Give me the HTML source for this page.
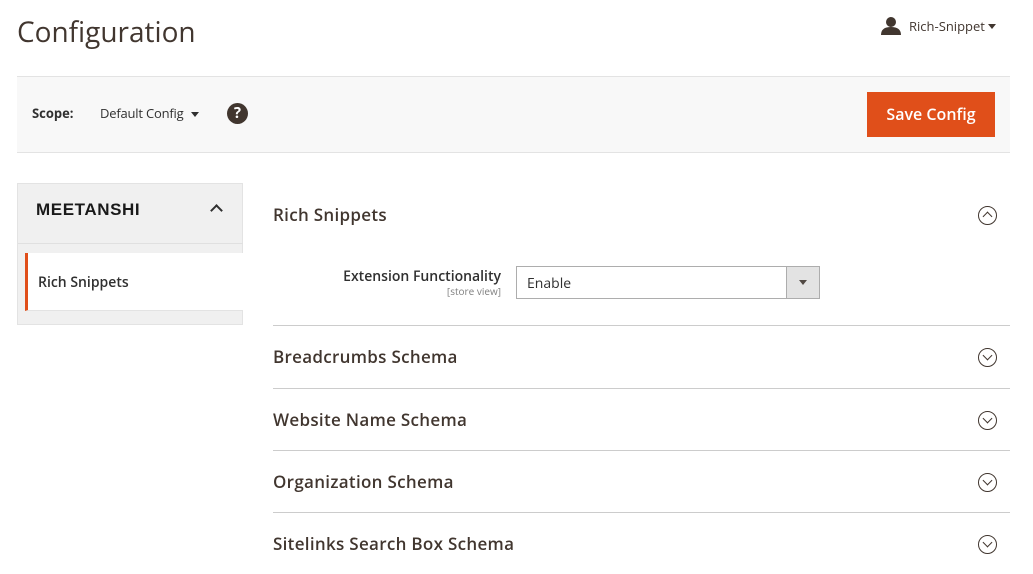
<!DOCTYPE html>
<html><head><style>
*{box-sizing:border-box;margin:0;padding:0}
body{width:1033px;height:574px;background:#fff;font-family:"Open Sans","Liberation Sans",sans-serif;color:#303030;position:relative;overflow:hidden}
.a{position:absolute}
.sec{position:absolute;left:273px;font-size:17px;font-weight:600;color:#41362f;letter-spacing:.3px}
.line{position:absolute;left:273px;width:737px;height:1px;background:#cccccc}
.circ{position:absolute;left:978px;width:19px;height:19px;border:1px solid #41362f;border-radius:50%}
</style></head><body>
<div class="a" style="left:17px;top:13px;font-size:28px;color:#41362f">Configuration</div>
<svg class="a" style="left:880px;top:16px" width="22" height="20" viewBox="0 0 22 20"><circle cx="11" cy="6" r="5" fill="#41362f"/><path d="M1 19 Q1 11 11 11 Q21 11 21 19Z" fill="#41362f"/></svg>
<div class="a" style="left:909px;top:17px;font-size:13px;color:#41362f">Rich-Snippet</div>
<div class="a" style="left:988px;top:24px;border:4px solid transparent;border-top:5px solid #41362f;border-bottom:0"></div>
<div class="a" style="left:17px;top:76px;width:993px;height:77px;background:#f8f8f8;border-top:1px solid #e3e3e3;border-bottom:1px solid #e3e3e3"></div>
<div class="a" style="left:32px;top:104px;font-size:13px;font-weight:bold;color:#303030">Scope:</div>
<div class="a" style="left:100px;top:104px;font-size:13px;color:#303030;letter-spacing:-.2px">Default Config</div>
<div class="a" style="left:191px;top:112px;border:4px solid transparent;border-top:5px solid #303030;border-bottom:0"></div>
<div class="a" style="left:227px;top:103px;width:21px;height:21px;border-radius:50%;background:#41362f;color:#fff;font-size:15px;font-weight:bold;text-align:center;line-height:21px">?</div>
<div class="a" style="left:867px;top:92px;width:128px;height:45px;background:#e04f1a;color:#fff;font-size:16px;font-weight:600;text-align:center;line-height:45px">Save Config</div>
<div class="a" style="left:17px;top:183px;width:226px;height:142px;background:#f0f0f0;border:1px solid #e3e3e3"></div>
<div class="a" style="left:18px;top:243px;width:225px;height:1px;background:#e0e0e0"></div>
<div class="a" style="left:36px;top:200px;font-size:17px;font-weight:900;color:#1a1a1a;letter-spacing:.6px;font-family:'Liberation Sans',sans-serif">MEETANSHI</div>
<div class="a" style="left:212px;top:206px;width:9px;height:9px;border-left:2px solid #303030;border-top:2px solid #303030;transform:rotate(45deg)"></div>
<div class="a" style="left:25px;top:253px;width:218px;height:58px;background:#fff;border-left:3px solid #e04f1a;border-bottom:1px solid #e3e3e3"></div>
<div class="a" style="left:38px;top:273px;font-size:14px;font-weight:600;color:#303030">Rich Snippets</div>
<div class="sec" style="top:203px">Rich Snippets</div>
<div class="circ" style="top:206px"></div>
<div class="a" style="left:984px;top:213px;width:7px;height:7px;border-left:1.5px solid #41362f;border-top:1.5px solid #41362f;transform:rotate(45deg)"></div>
<div class="a" style="left:300px;top:267px;width:201px;text-align:right;font-size:14px;font-weight:600;color:#303030">Extension Functionality</div>
<div class="a" style="left:300px;top:284px;width:201px;text-align:right;font-size:10px;color:#808080">[store view]</div>
<div class="a" style="left:516px;top:266px;width:304px;height:33px;border:1px solid #adadad;background:#fff"></div>
<div class="a" style="left:786px;top:267px;width:33px;height:31px;background:#e3e3e3;border-left:1px solid #adadad"></div>
<div class="a" style="left:799px;top:280px;border:4px solid transparent;border-top:5px solid #514943;border-bottom:0"></div>
<div class="a" style="left:527px;top:274px;font-size:14px;color:#303030">Enable</div>
<div class="line" style="top:325px"></div>
<div class="sec" style="top:345px">Breadcrumbs Schema</div>
<div class="line" style="top:388px"></div>
<div class="sec" style="top:408px">Website Name Schema</div>
<div class="line" style="top:450px"></div>
<div class="sec" style="top:470px">Organization Schema</div>
<div class="line" style="top:512px"></div>
<div class="sec" style="top:532px">Sitelinks Search Box Schema</div>
<div class="circ" style="top:348px"></div><div class="a" style="left:984px;top:352px;width:7px;height:7px;border-right:1.5px solid #41362f;border-bottom:1.5px solid #41362f;transform:rotate(45deg)"></div>
<div class="circ" style="top:411px"></div><div class="a" style="left:984px;top:415px;width:7px;height:7px;border-right:1.5px solid #41362f;border-bottom:1.5px solid #41362f;transform:rotate(45deg)"></div>
<div class="circ" style="top:473px"></div><div class="a" style="left:984px;top:477px;width:7px;height:7px;border-right:1.5px solid #41362f;border-bottom:1.5px solid #41362f;transform:rotate(45deg)"></div>
<div class="circ" style="top:535px"></div><div class="a" style="left:984px;top:539px;width:7px;height:7px;border-right:1.5px solid #41362f;border-bottom:1.5px solid #41362f;transform:rotate(45deg)"></div>
</body></html>
